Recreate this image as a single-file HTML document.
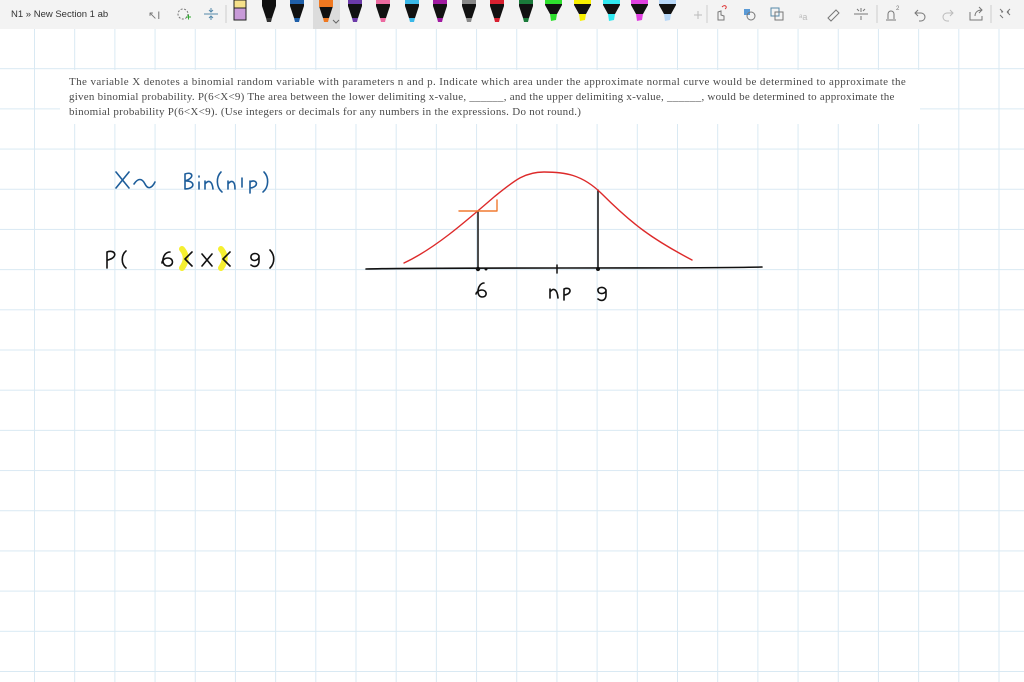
<!DOCTYPE html>
<html><head><meta charset="utf-8"><style>
html,body{margin:0;padding:0;width:1024px;height:682px;overflow:hidden;background:#fff;}
body{position:relative;font-family:"Liberation Sans",sans-serif;
background-image:linear-gradient(#d9e9f3 1px,transparent 1px),linear-gradient(90deg,#d9e9f3 1px,transparent 1px);
background-size:40.2px 40.2px;background-position:34px 28px;}
#tb{position:absolute;left:0;top:0;width:1024px;height:29px;background:#f3f3f3;}
#title{position:absolute;left:11px;top:9px;font-size:9.5px;color:#333;}
#q{position:absolute;left:60px;top:70px;width:860px;height:54px;background:#fff;}
#q div{position:absolute;left:9px;white-space:nowrap;font-family:"Liberation Serif",serif;font-size:11px;color:#4a4a4a;letter-spacing:0.33px;}
svg{position:absolute;left:0;top:0;}
</style></head><body>
<div id="tb"></div>
<div id="title">N1 » New Section 1 ab</div>
<div id="q">
<div style="top:6px;letter-spacing:0.4px">The variable X denotes a binomial random variable with parameters n and p. Indicate which area under the approximate normal curve would be determined to approximate the</div>
<div style="top:21px;letter-spacing:0.24px">given binomial probability. P(6&lt;X&lt;9) The area between the lower delimiting x-value, ______, and the upper delimiting x-value, ______, would be determined to approximate the</div>
<div style="top:36px;letter-spacing:0.28px">binomial probability P(6&lt;X&lt;9). (Use integers or decimals for any numbers in the expressions. Do not round.)</div>
</div>
<svg width="1024" height="682" viewBox="0 0 1024 682">
<g fill="none" stroke="#777" stroke-width="1">
<text x="148" y="19" font-size="11" fill="#777" stroke="none">↖I</text>
<circle cx="183" cy="14" r="5" stroke-dasharray="2 1.5"/><path d="M186 17h5M188.5 14.5v5" stroke="#3a3"/>
<path d="M204 14h14M211 8v4M209 10l2 2 2-2M211 20v-4M209 18l2-2 2 2" stroke="#58a"/>
<path d="M226 5v18" stroke="#ccc"/>
<path d="M694 15h8M698 11v8" stroke="#bbb"/>
<path d="M707 5v18" stroke="#ccc"/>
<path d="M718 12v8h6v-4l-3-1v-4z"/><path d="M722 7c3-3 6 0 3 2" stroke="#d33"/>
<rect x="744" y="9" width="6" height="6" fill="#5a9ad6" stroke="none"/><circle cx="751" cy="16" r="4"/>
<rect x="771" y="8" width="8" height="8" stroke="#58a"/><rect x="775" y="12" width="8" height="8"/>
<text x="799" y="20" font-size="9" fill="#bbb" stroke="none">ᵃa</text>
<path d="M828 18l8-8 3 3-8 8z"/>
<path d="M854 14h14M861 8v4M861 16v4M857 9l2 2M865 9l-2 2"/>
<path d="M877 5v18" stroke="#ccc"/>
<path d="M886 20h10M888 19v-5a3 3 0 0 1 6 0v5"/><text x="896" y="10" font-size="6" fill="#777" stroke="none">2</text>
<path d="M918 10l-3 3 3 3M915 13h6a4 4 0 0 1 0 8h-2"/>
<path d="M950 10l3 3-3 3M953 13h-6a4 4 0 0 0 0 8h2" stroke="#bbb"/>
<path d="M970 12v8h12v-4M975 16c0-4 3-6 7-6M979 7l3 3-3 3"/>
<path d="M991 5v18" stroke="#ccc"/>
<path d="M1000 9l3 3M1000 15l3 3M1010 9l-3 3M1010 15l-3-3M1003 12h-2M1007 12h2"/>
</g>
<rect x="313" y="0" width="27" height="29" fill="#dcdcdc"/>
<g transform="translate(240,0)"><rect x="-6" y="0" width="12" height="8" fill="#f5e08a" stroke="#222"/><rect x="-6" y="8" width="12" height="12" fill="#c89ad8" stroke="#222"/></g>
<g stroke="none">
<path d="M262 0h14v6l-4 12h-6l-4-12z" fill="#111"/><path d="M266 18h6l-1 4h-4z" fill="#333"/>
<path d="M290 0h14v6l-4 12h-6l-4-12z" fill="#111"/><rect x="290" y="0" width="14" height="4" fill="#1f5fa8"/><path d="M294 18h6l-1 4h-4z" fill="#1f5fa8"/>
<path d="M319 0h14v6l-4 12h-6l-4-12z" fill="#111"/><rect x="319" y="0" width="14" height="7" fill="#f07820"/><path d="M323 18h6l-1 4h-4z" fill="#f07820"/>
<path d="M348 0h14v6l-4 12h-6l-4-12z" fill="#111"/><rect x="348" y="0" width="14" height="4" fill="#6b3aa8"/><path d="M352 18h6l-1 4h-4z" fill="#6b3aa8"/>
<path d="M376 0h14v6l-4 12h-6l-4-12z" fill="#111"/><rect x="376" y="0" width="14" height="4" fill="#ec6aa0"/><path d="M380 18h6l-1 4h-4z" fill="#ec6aa0"/>
<path d="M405 0h14v6l-4 12h-6l-4-12z" fill="#111"/><rect x="405" y="0" width="14" height="4" fill="#3ab8e8"/><path d="M409 18h6l-1 4h-4z" fill="#3ab8e8"/>
<path d="M433 0h14v6l-4 12h-6l-4-12z" fill="#111"/><rect x="433" y="0" width="14" height="4" fill="#a01aa0"/><path d="M437 18h6l-1 4h-4z" fill="#a01aa0"/>
<path d="M462 0h14v6l-4 12h-6l-4-12z" fill="#111"/><rect x="462" y="0" width="14" height="4" fill="#888"/><path d="M466 18h6l-1 4h-4z" fill="#888"/>
<path d="M490 0h14v6l-4 12h-6l-4-12z" fill="#111"/><rect x="490" y="0" width="14" height="4" fill="#d82030"/><path d="M494 18h6l-1 4h-4z" fill="#d82030"/>
<path d="M519 0h14v6l-4 12h-6l-4-12z" fill="#111"/><rect x="519" y="0" width="14" height="4" fill="#1a7a3a"/><path d="M523 18h6l-1 4h-4z" fill="#1a7a3a"/>
<path d="M545 0h17v5l-5 9h-7l-5-9z" fill="#111"/><rect x="545" y="0" width="17" height="4" fill="#2ee02e"/><path d="M550 14h7l-1 6-5 1z" fill="#2ee02e"/>
<path d="M574 0h17v5l-5 9h-7l-5-9z" fill="#111"/><rect x="574" y="0" width="17" height="4" fill="#f8f000"/><path d="M579 14h7l-1 6-5 1z" fill="#f8f000"/>
<path d="M603 0h17v5l-5 9h-7l-5-9z" fill="#111"/><rect x="603" y="0" width="17" height="4" fill="#30e8f0"/><path d="M608 14h7l-1 6-5 1z" fill="#30e8f0"/>
<path d="M631 0h17v5l-5 9h-7l-5-9z" fill="#111"/><rect x="631" y="0" width="17" height="4" fill="#e040e0"/><path d="M636 14h7l-1 6-5 1z" fill="#e040e0"/>
<path d="M659 0h17v5l-5 9h-7l-5-9z" fill="#111"/><rect x="659" y="0" width="17" height="4" fill="#b8d8f8"/><path d="M664 14h7l-1 6-5 1z" fill="#b8d8f8"/>
</g>
<path d="M333 20l3 3 3-3" fill="none" stroke="#666"/>
<g fill="none" stroke-linecap="round" stroke-linejoin="round">
<g stroke="#1d5d9a" stroke-width="1.6">
<path d="M116 172l13 16M129 172l-13 16"/><path d="M134 184c4-6 8-6 11 0s7 4 10-2"/>
<path d="M185 174v15M185 174c8-3 10 4 0 7c10-1 11 8 0 8"/>
<path d="M199 182v7M199 176v1"/><path d="M205 181v8M205 184c3-4 7-4 8 5"/>
<path d="M221 172c-5 5-5 15 1 20"/><path d="M228 181v8M228 184c3-4 7-4 7 5"/><path d="M242 178v9"/>
<path d="M250 181v12M250 182c7-4 10 5 0 6"/><path d="M264 172c5 5 5 15-1 20"/>
</g>
<path d="M182 249c5 6 5 12 0 19M221 249c5 6 5 12 0 19" stroke="#f5ef30" stroke-width="6"/>
<g stroke="#111" stroke-width="1.6">
<path d="M107 252v16M107 252c8-3 12 5 1 8"/><path d="M126 251c-5 4-5 13 0 17"/>
<path d="M170 252c-8 0-10 14-2 14c6 0 6-8 0-8c-4 0-6 3-6 5"/>
<path d="M192 252l-7 7 7 7"/><path d="M202 254l10 12M212 254l-10 12"/><path d="M230 252l-7 7 7 7"/>
<path d="M259 256c-2-4-9-3-8 2c1 4 8 3 8-2v5c0 5-4 7-8 4"/><path d="M270 250c5 5 5 13 0 18"/>
</g>
<path d="M366 269c40-1 100-1 200-1s160 0 196-1" stroke="#111" stroke-width="1.6"/>
<path d="M478 212v57M598 190v79M557 265v8" stroke="#111" stroke-width="1.5"/>
<circle cx="478" cy="269" r="2.2" fill="#111" stroke="none"/><circle cx="598" cy="269" r="2" fill="#111" stroke="none"/><circle cx="486" cy="269" r="1.5" fill="#111" stroke="none"/>
<path d="M404 263c30-14 60-40 90-66c20-16 30-25 50-25s38 2 58 22c30 30 50 45 90 66" stroke="#dd2a2a" stroke-width="1.4"/>
<path d="M459 211h38v-11" stroke="#f07a30" stroke-width="1.4"/>
<g stroke="#111" stroke-width="1.6">
<path d="M484 283c-6 0-9 13-2 14c6 0 5-7 0-7c-4 0-6 3-6 4"/>
<path d="M550 289v9M550 292c3-4 7-4 8 6"/><path d="M564 289v11M564 289c7-3 9 5 0 6"/>
<path d="M606 290c-2-4-9-3-8 1c1 4 8 3 8-1v5c0 5-4 7-8 4"/>
</g>
</g>
</svg>
</body></html>
